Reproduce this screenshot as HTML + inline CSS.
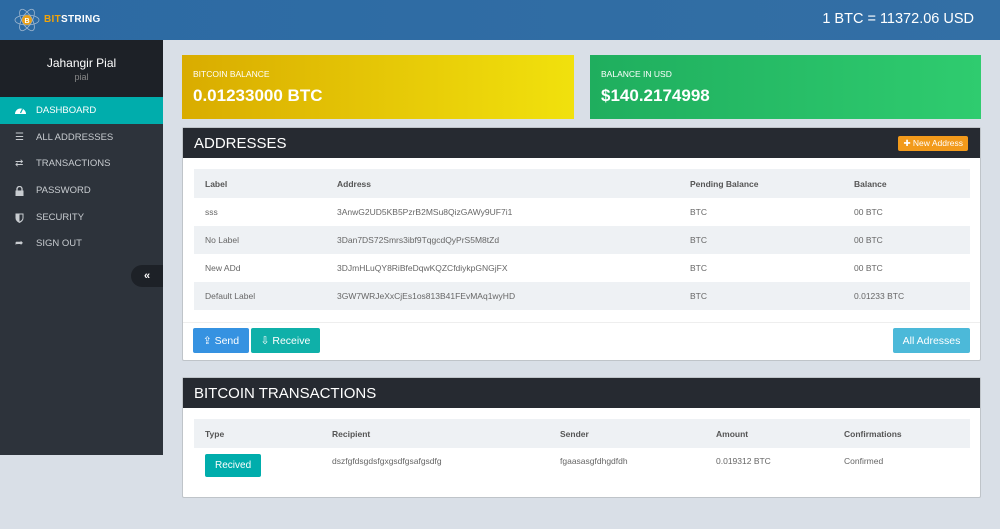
<!DOCTYPE html>
<html><head><meta charset="utf-8"><style>
*{box-sizing:border-box;margin:0;padding:0}
body{width:1000px;height:529px;overflow:hidden;background:#d9dfe7;font-family:"Liberation Sans",sans-serif;position:relative}
.top{position:absolute;left:0;top:0;width:1000px;height:40px;background:linear-gradient(90deg,#2c6aa3,#336fa5)}
.logo{position:absolute;left:14px;top:7px}
.brand{position:absolute;left:44px;top:14px;font-size:10px;font-weight:bold;color:#fff;letter-spacing:.3px}
.brand b{color:#f0a30a}
.rate{position:absolute;right:26px;top:11px;color:#fff;font-size:14.5px}
.side{position:absolute;left:0;top:40px;width:163px;height:415px;background:#2d333b}
.user{height:57px;background:#1d2127;text-align:center;color:#fff;font-size:12px;padding-top:16px}
.user small{display:block;color:#888;font-size:9px;margin-top:2px}
.nav div{height:26.7px;line-height:27px;color:#c8ccd0;font-size:9.5px;padding-left:36px;position:relative}
.nav div i{position:absolute;left:15px;top:0;font-style:normal;font-size:10px}
.nav div svg{position:absolute;left:15px;top:9px}
.nav .act{background:#00adac;color:#fff}
.tog{position:absolute;left:131px;top:225px;width:32px;height:22px;background:#1d2127;border-radius:11px 0 0 11px;color:#fff;font-size:11px;line-height:22px;text-align:center;font-weight:bold}
.card{position:absolute;top:55px;height:64px;color:#fff;padding:14px 11px}
.card small{font-size:8.5px;display:block}
.card b{font-size:17px;display:block;margin-top:7px}
.panel{position:absolute;left:182px;width:799px;background:#fff;border:1px solid #bfc4c9;border-radius:2px}
.ph{height:30px;background:#262a31;color:#fff;font-size:15px;line-height:31px;padding-left:11px}
table{border-collapse:collapse;position:absolute;left:11px;width:776px;font-size:8.5px;color:#666}
td,th{text-align:left;padding-left:11px;height:28px}
th{color:#555;font-weight:bold;height:29px}
tr.g{background:#eef1f4}
.btn{position:absolute;height:25px;line-height:26px;color:#fff;font-size:10.5px;border-radius:2px;text-align:center}
</style></head><body>
<div class="top">
<svg class="logo" width="26" height="26" viewBox="0 0 26 26"><g fill="none" stroke="#9fb7cf" stroke-width=".8"><ellipse cx="13" cy="13" rx="12" ry="5"/><ellipse cx="13" cy="13" rx="12" ry="5" transform="rotate(60 13 13)"/><ellipse cx="13" cy="13" rx="12" ry="5" transform="rotate(120 13 13)"/></g><circle cx="13" cy="13" r="5" fill="#e8a018"/><text x="13" y="16" font-size="7" fill="#fff" text-anchor="middle" font-weight="bold" font-family="Liberation Sans">B</text></svg>
<div class="brand"><b>BIT</b>STRING</div>
<div class="rate">1 BTC = 11372.06 USD</div></div>
<div class="side">
<div class="user">Jahangir Pial<small>pial</small></div>
<div class="nav">
<div class="act"><svg width="11" height="8" viewBox="0 0 11 8"><path d="M0 8A5.5 5.5 0 0 1 11 8Z" fill="#fff"/><path d="M5.5 7L7.5 3" stroke="#00adac" stroke-width="1.2"/></svg>DASHBOARD</div>
<div><i>☰</i>ALL ADDRESSES</div>
<div><i>⇄</i>TRANSACTIONS</div>
<div><svg width="9" height="10" viewBox="0 0 9 10"><path d="M2 5V3a2.5 2.5 0 0 1 5 0v2" fill="none" stroke="#c8ccd0" stroke-width="1.3"/><rect x="0.5" y="4.5" width="8" height="5.5" fill="#c8ccd0"/></svg>PASSWORD</div>
<div><svg width="9" height="10" viewBox="0 0 9 10"><path d="M0.5 0.5H8.5V5Q8.5 8 4.5 10Q0.5 8 0.5 5Z" fill="#c8ccd0"/><path d="M4.5 1.5V8.5Q7.5 7 7.5 5V1.5Z" fill="#2d333b"/></svg>SECURITY</div>
<div><i>➦</i>SIGN OUT</div></div>
<div class="tog">«</div></div>
<div class="card" style="left:182px;width:392px;background:linear-gradient(90deg,#d9ac00,#f1e10d)"><small>BITCOIN BALANCE</small><b>0.01233000 BTC</b></div>
<div class="card" style="left:590px;width:391px;background:linear-gradient(90deg,#1fae5e,#2fcc6f)"><small>BALANCE IN USD</small><b>$140.2174998</b></div>
<div class="panel" style="top:127px;height:234px">
<div class="ph">ADDRESSES<span style="position:absolute;right:12px;top:8px;height:15px;line-height:15px;background:#f29a1b;color:#fff;font-size:8.5px;padding:0 5px;border-radius:2px">✚ New Address</span></div>
<table style="top:41px">
<tr class="g"><th style="width:132px">Label</th><th style="width:353px">Address</th><th style="width:164px">Pending Balance</th><th>Balance</th></tr>
<tr><td>sss</td><td>3AnwG2UD5KB5PzrB2MSu8QizGAWy9UF7i1</td><td>BTC</td><td>00 BTC</td></tr>
<tr class="g"><td>No Label</td><td>3Dan7DS72Smrs3ibf9TqgcdQyPrS5M8tZd</td><td>BTC</td><td>00 BTC</td></tr>
<tr><td>New ADd</td><td>3DJmHLuQY8RiBfeDqwKQZCfdiykpGNGjFX</td><td>BTC</td><td>00 BTC</td></tr>
<tr class="g"><td>Default Label</td><td>3GW7WRJeXxCjEs1os813B41FEvMAq1wyHD</td><td>BTC</td><td>0.01233 BTC</td></tr>
</table>
<div style="position:absolute;left:0;right:0;top:194px;border-top:1px solid #eee"></div>
<div class="btn" style="left:10px;top:200px;width:56px;background:#3592e1">⇪ Send</div>
<div class="btn" style="left:68px;top:200px;width:69px;background:#0fb0a9">⇩ Receive</div>
<div class="btn" style="left:710px;top:200px;width:77px;background:#4cb9d9">All Adresses</div>
</div>
<div class="panel" style="top:377px;height:121px">
<div class="ph">BITCOIN TRANSACTIONS</div>
<table style="top:41px">
<tr class="g"><th style="width:127px">Type</th><th style="width:228px">Recipient</th><th style="width:156px">Sender</th><th style="width:128px">Amount</th><th>Confirmations</th></tr>
<tr><td style="height:34px"><span style="display:inline-block;background:#00adac;color:#fff;font-size:10px;padding:6px 10px;border-radius:2px">Recived</span></td><td style="vertical-align:top;padding-top:8px">dszfgfdsgdsfgxgsdfgsafgsdfg</td><td style="vertical-align:top;padding-top:8px">fgaasasgfdhgdfdh</td><td style="vertical-align:top;padding-top:8px">0.019312 BTC</td><td style="vertical-align:top;padding-top:8px">Confirmed</td></tr>
</table></div>
</body></html>
